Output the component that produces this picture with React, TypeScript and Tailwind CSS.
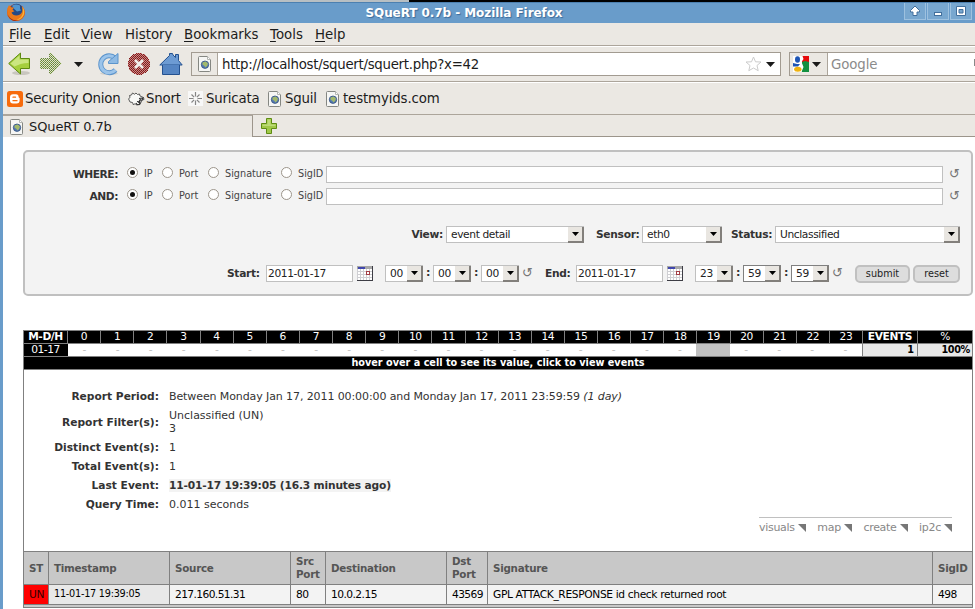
import type { ReactNode } from "react";
import clsx from "clsx";

const hours = Array.from({ length: 24 }, (_, i) => i);

const menus = [
  { before: "", key: "F", after: "ile", width: "w-[35px]" },
  { before: "", key: "E", after: "dit", width: "w-[37px]" },
  { before: "", key: "V", after: "iew", width: "w-[44px]" },
  { before: "Hi", key: "s", after: "tory", width: "w-[59px]" },
  { before: "", key: "B", after: "ookmarks", width: "w-[86px]" },
  { before: "", key: "T", after: "ools", width: "w-[45px]" },
  { before: "", key: "H", after: "elp", width: "w-[40px]" },
];

function PageIcon() {
  return (
    <svg width="14" height="16" viewBox="0 0 14 16" className="block shrink-0">
      <path d="M1.5.5h8l3 3v11a1 1 0 0 1-1 1h-10a1 1 0 0 1-1-1v-13a1 1 0 0 1 1-1z" fill="#f6f6f4" stroke="#858782" />
      <path d="M9.5.5v3h3" fill="#fff" stroke="#b5b6b2" />
      <circle cx="7" cy="8.700" r="3.700" fill="#5579b3" stroke="#34507f" strokeWidth=".8" />
      <path d="M4.500 6.500l3.100-.9 2.300 1.600-.5 2.400-1.700 1.900-1.500-1.800-1.700-1.100z" fill="#a3b96a" />
    </svg>
  );
}

function FirefoxIcon() {
  return (
    <svg width="20" height="19" viewBox="0 0 20 20" preserveAspectRatio="none">
      <circle cx="10" cy="10" r="9" fill="#d9480f" />
      <circle cx="10.5" cy="7.6" r="6.8" fill="#244a86" />
      <path d="M6 3c2.500-2 6-1.800 8-.4L14 6l1 2-4 1-3-3z" fill="#4f95d0" />
      <path d="M1.200 6L3 2.200l2 2.300 3 .3-1.500 2.400 2 1.500-3 1.300c1 3 5 4 8.500 2 2.500-1.500 3-5 2-8.500 2.500 2.500 3.500 6.500 2 10-2 4-5.500 5.500-9 5-4.500-.5-7.500-4-7.800-8z" fill="#e9791c" />
      <path d="M16.500 4c2 3 2.500 7 .5 10-1.500 2.500-4 3.800-6.500 3.800 4-1.300 6.500-4.800 6.500-8.500z" fill="#f8b63a" />
      <path d="M2 12c1.500 4.500 6 7 11 6-5 2.400-10-.5-11-6z" fill="#a32c10" />
    </svg>
  );
}

function BackIcon() {
  return (
    <svg width="24" height="24" viewBox="0 0 24 24">
      <ellipse cx="13" cy="21" rx="9" ry="2" fill="#c9c6bf" />
      <path d="M.700 11.500L12.500 1v5.500h9v10h-9V22z" fill="#a5cf3d" stroke="#5d8a10" />
      <path d="M2.500 11.500l9-8v4h9v3.400c-6 .2-10 1.500-14 3.500z" fill="#cbe681" />
    </svg>
  );
}

function ForwardIcon() {
  return (
    <svg width="24" height="24" viewBox="0 0 24 24" shapeRendering="crispEdges">
      <defs>
        <pattern id="fwd" width="2" height="2" patternUnits="userSpaceOnUse">
          <rect width="2" height="2" fill="#dfe3cd" />
          <rect width="1" height="1" fill="#64813a" />
          <rect x="1" y="1" width="1" height="1" fill="#7c9b43" />
        </pattern>
      </defs>
      <path d="M1 6h9V1h2l11 10v1L12 22h-2v-5H1z" fill="url(#fwd)" />
    </svg>
  );
}

function ReloadIcon() {
  return (
    <svg width="24" height="24" viewBox="0 0 24 24">
      <ellipse cx="13" cy="21.500" rx="9" ry="1.500" fill="#d3d0ca" />
      <path d="M19 6A8.500 8.500 0 1 0 19.500 18" fill="none" stroke="#5b94cc" strokeWidth="5" />
      <path d="M19 6A8.500 8.500 0 1 0 19.500 18" fill="none" stroke="#9cc4ea" strokeWidth="3.200" />
      <path d="M22 1.500v10h-9.500v-2l3-2.500z" fill="#8ebae4" stroke="#5b94cc" />
    </svg>
  );
}

function StopIcon() {
  return (
    <svg width="24" height="24" viewBox="0 0 24 24">
      <defs>
        <pattern id="stop" width="2" height="2" patternUnits="userSpaceOnUse">
          <rect width="2" height="2" fill="#c88a88" />
          <rect width="1" height="1" fill="#7d1717" />
          <rect x="1" y="1" width="1" height="1" fill="#8f2020" />
        </pattern>
      </defs>
      <circle cx="12" cy="12" r="11" fill="url(#stop)" shapeRendering="crispEdges" />
      <path d="M8 8l8 8M16 8l-8 8" stroke="#f1eeeb" strokeWidth="2.600" />
    </svg>
  );
}

function HomeIcon() {
  return (
    <svg width="24" height="24" viewBox="0 0 24 24">
      <path d="M3.500 12v10.500h17V12" fill="#5585c3" stroke="#24518f" />
      <path d="M.8 13L10.500 3.500V1.500h3l.5 1.500 2.500 2.500V2.500h3v6L23.200 13z" fill="#6d9bd3" stroke="#24518f" />
      <rect x="4" y="13" width="16" height="9" fill="#5585c3" />
    </svg>
  );
}

function BloggerIcon() {
  return (
    <svg width="16" height="16" viewBox="0 0 16 16">
      <rect width="16" height="16" rx="2.500" fill="#f76b0c" />
      <path d="M6 3.200h3a2.600 2.600 0 0 1 2.600 2.600c0 .8.300 1 1 1.200v2.500a3 3 0 0 1-3 3H6a3 3 0 0 1-3-3V6.200a3 3 0 0 1 3-3z" fill="#fff" />
      <path d="M6 6.200h2.500M6 9.700h4" stroke="#f76b0c" strokeWidth="1.300" strokeLinecap="round" />
    </svg>
  );
}

function SnortIcon() {
  return (
    <svg width="17" height="14" viewBox="0 0 17 14" fill="none" stroke="#4a4a4a" strokeWidth=".9">
      <path d="M.6 7L2 5.200 1.500 3.500l2-.5L4.500 1l2 1.200L8 1l1.500 1.500 2-.5L12 4l3.500 1.500.5 2-2 .5-2 4.500-3.500.5L7 11.500 5.500 13 4.500 10.500 2 10z" fill="#f8f8f6" />
      <path d="M11 6.500l4-.5-1 2-3 .5M9 9.500l3 .5-.5 2.200-2.500.3-1-1.500M12.500 7l-2 4" stroke="#333" strokeWidth="1.100" />
    </svg>
  );
}

function SuricataIcon() {
  return (
    <svg width="15" height="15" viewBox="0 0 15 15">
      <rect width="15" height="15" fill="#f8f8f8" />
      <path
        d="M7.500 1v4.500M7.500 9.500V14M1 7.500h4.500M9.500 7.500H14M3.500 3.500l2.600 2.600M8.900 8.900l2.600 2.600M11.500 3.500L8.900 6.100M6.100 8.900l-2.600 2.600"
        stroke="#858585"
        strokeWidth="1.200"
      />
    </svg>
  );
}

function GoogleIcon() {
  return (
    <svg width="16" height="16" viewBox="0 0 16 16">
      <rect width="16" height="16" fill="#fff" />
      <path d="M8 0h8v6H9z" fill="#e60b0b" />
      <path d="M9 6l3-1 4 1v10H8.500z" fill="#129040" />
      <path d="M7 0h2.500L10.500 3 8.500 6 10.500 11l-2 5H7z" fill="#fff" />
      <ellipse cx="4.500" cy="3.500" rx="2.500" ry="3.300" fill="#1e55b5" />
      <path d="M0 7l4 1 3 0-2 2.500H0z" fill="#1e55b5" />
      <ellipse cx="4.800" cy="13.300" rx="3.700" ry="2.500" fill="#eeb211" />
    </svg>
  );
}

function CalendarIcon() {
  return (
    <svg width="16" height="15" viewBox="0 0 16 15" shapeRendering="crispEdges" className="block shrink-0">
      <rect width="16" height="15" fill="#cfcfd3" />
      <path d="M1 3h2v2H1zM4 3h2v2H4zM7 3h2v2H7zM10 3h2v2h-2zM13 3h2v2h-2zM1 6h2v2H1zM4 6h2v2H4zM7 6h2v2H7zM13 6h2v2h-2zM1 9h2v2H1zM4 9h2v2H4zM7 9h2v2H7zM10 9h2v2h-2zM13 9h2v2h-2zM1 12h2v2H1zM4 12h2v2H4zM7 12h2v2H7zM10 12h2v2h-2zM13 12h2v2h-2z" fill="#fff" />
      <path d="M0 0h16v3H0z" fill="#a7a7a7" />
      <path d="M1 1h7v2H1z" fill="#4047ad" />
      <path d="M9.500 5.500h3v3h-3z" fill="#fff" stroke="#a33d45" />
      <path d="M15 0h1v15H0v-1h15z" fill="#3d3d45" />
    </svg>
  );
}

function Caret({ className }: { className?: string }) {
  return (
    <svg width="9" height="5" viewBox="0 0 9 5" className={clsx("block shrink-0", className)}>
      <path d="M0 0h9L4.500 5z" fill="#1a1a1a" />
    </svg>
  );
}

function Undo({ className }: { className?: string }) {
  return <span className={clsx("w-[10px] text-[13px] leading-[17px] tracking-normal text-[#777]", className)}>↺</span>;
}

function Radio({ checked }: { checked?: boolean }) {
  return (
    <span className="flex size-[11px] shrink-0 items-center justify-center rounded-full border border-[#9c958b] bg-white">
      {checked && <span className="size-[5px] rounded-full bg-[#111]" />}
    </span>
  );
}

function Select({ children, className, dark }: { children: ReactNode; className: string; dark?: boolean }) {
  return (
    <div
      className={clsx(
        "flex h-[17px] shrink-0 items-start justify-between border bg-white pl-1 text-[10.67px] tracking-[-0.38px] text-[#222]",
        dark ? "border-[#808080]" : "border-[#c0c0c0]",
        className
      )}
    >
      <span className="leading-[15px]">{children}</span>
      <span className="-mr-px flex h-4 w-4 items-center justify-center border-r-2 border-b-2 border-[#827f7b] bg-[#e9e6e1]">
        <svg width="7" height="4" viewBox="0 0 7 4">
          <path d="M0 0h7L3.500 4z" fill="#000" />
        </svg>
      </span>
    </div>
  );
}

function FilterRow({ label }: { label: string }) {
  return (
    <div className="flex h-[17px] items-center text-[9.700px] tracking-normal text-[#444]">
      <span className="w-[93px] text-right text-[10.67px] font-bold tracking-[-0.45px] text-[#333]">{label}</span>
      <span className="ml-[9px] -mt-1"><Radio checked /></span>
      <span className="ml-[6px] w-[18px]">IP</span>
      <span className="-mt-1"><Radio /></span>
      <span className="ml-[6px] w-[29px]">Port</span>
      <span className="-mt-1"><Radio /></span>
      <span className="ml-[6px] w-[56px]">Signature</span>
      <span className="-mt-1"><Radio /></span>
      <span className="ml-[6px] w-[28px]">SigID</span>
      <input className="h-[17px] w-[617px] border border-[#c0c0c0] bg-white" />
      <Undo className="ml-[6px] -mt-0.5" />
    </div>
  );
}

function TimePicker({ values, dark }: { values: string[]; dark?: boolean }) {
  return (
    <div className="flex items-center">
      {values.map((value, i) => (
        <div key={i} className="flex items-center">
          {i > 0 && <span className="w-[10px] text-center text-[11px] font-bold">:</span>}
          <Select className="w-[38px]" dark={dark && i > 0}>{value}</Select>
        </div>
      ))}
    </div>
  );
}

function DateInput() {
  return (
    <div className="flex h-[17px] w-[87px] shrink-0 items-center border border-[#c0c0c0] bg-white pl-px text-[10.67px] tracking-[-0.4px] text-[#222]">
      2011-01-17
    </div>
  );
}

function Browser() {
  return (
    <header className="shrink-0 text-[13.33px] text-[#1c1c1c]">
      <div className="flex h-[2px] bg-black">
        <div className="w-[409px] bg-[#b8bfc3]" />
      </div>
      <div className="flex h-[21px] items-start border-t border-[#4c80b0] bg-[#699cca]">
        <div className="ml-[6px] w-[20px]"><FirefoxIcon /></div>
        <h1 className="w-[872px] pl-[4px] text-center text-[12px] leading-[20px] font-bold tracking-[-0.07px] text-white [text-shadow:1px_1px_1px_#3b6a99]">
          SQueRT 0.7b - Mozilla Firefox
        </h1>
        <div className="ml-[6px] flex shrink-0 gap-px text-white">
          <span className="flex h-[17px] w-[22px] items-center justify-center border border-t-0 border-[#9dc1df] bg-[#78a7cf]">
            <svg width="12" height="12" viewBox="0 0 12 12"><path d="M6 1L1.500 5.500v1.500h2.500v3.500h4V7h2.500V5.500z" fill="#fff" stroke="#426f9c" /></svg>
          </span>
          <span className="flex h-[17px] w-[22px] items-center justify-center border border-t-0 border-[#9dc1df] bg-[#78a7cf] pt-1.5">
            <span className="h-1 w-2 border border-[#426f9c] bg-white" />
          </span>
          <span className="flex h-[17px] w-[22px] items-center justify-center border border-t-0 border-[#9dc1df] bg-[#78a7cf]">
            <svg width="10" height="10" viewBox="0 0 10 10"><path d="M.5.500h9v9h-9zM3 3.500h4v3.500H3z" fill="#fff" fillRule="evenodd" stroke="#426f9c" /></svg>
          </span>
        </div>
      </div>
      <div className="border-l-[3px] border-[#699cca] bg-[#ebe8e3]">
        <nav className="flex h-[23px] items-center border-b border-[#aca59b] pt-px pl-[6px]">
          {menus.map((menu) => (
            <span key={menu.key} className={menu.width}>
              {menu.before}
              <span className="underline underline-offset-2">{menu.key}</span>
              {menu.after}
            </span>
          ))}
        </nav>
        <div className="flex h-[36px] items-center border-t border-b border-t-white border-b-[#aca59b] pl-[5px]">
          <BackIcon />
          <div className="ml-[7px]"><ForwardIcon /></div>
          <Caret className="ml-[11px]" />
          <div className="ml-[13px]"><ReloadIcon /></div>
          <div className="ml-[7px]"><StopIcon /></div>
          <div className="ml-[8px]"><HomeIcon /></div>
          <div className="ml-[8px] flex h-[24px] w-[590px] items-center border border-[#a29b91] bg-white">
            <div className="flex h-[22px] w-[26px] items-center justify-center border-r border-[#aca59b] bg-[#ebe8e3]">
              <PageIcon />
            </div>
            <span className="mt-px ml-[4px] tracking-[-0.28px]">http://localhost/squert/squert.php?x=42</span>
            <svg width="17" height="16" viewBox="0 0 17 16" className="ml-auto">
              <path d="M8.500 1l2 4.800 5.500.2-4 3.500 1.200 5.200-4.700-2.700-4.700 2.700L5 9.500 1 6l5.500-.2z" fill="#fff" stroke="#ccc" />
            </svg>
            <Caret className="mr-[5px] ml-[4px]" />
          </div>
          <div className="ml-[8px] flex h-[24px] flex-1 items-center border border-r-0 border-[#a29b91] bg-white">
            <div className="flex h-[22px] w-[38px] items-center border-r border-[#aca59b] bg-[#ebe8e3] pl-[3px]">
              <GoogleIcon />
              <Caret className="ml-[3px]" />
            </div>
            <span className="mt-px ml-[3px] tracking-[-0.1px] text-[#8b8b8b]">Google</span>
            <span className="mt-[-4px] ml-auto h-[7px] w-px bg-[#888]" />
          </div>
        </div>
        <div className="flex h-[33px] items-center border-t border-b border-t-white border-b-[#aca59b] pl-[4px] tracking-[-0.2px]">
          <BloggerIcon />
          <span className="ml-[2px] w-[103px]">Security Onion</span>
          <SnortIcon />
          <span className="ml-[1px] w-[42px]">Snort</span>
          <SuricataIcon />
          <span className="ml-[3px] w-[62px]">Suricata</span>
          <PageIcon />
          <span className="ml-[3px] w-[41px]">Sguil</span>
          <PageIcon />
          <span className="ml-[3px] tracking-[-0.13px]">testmyids.com</span>
        </div>
        <div className="flex h-[22px]">
          <div className="flex w-[250px] items-center border-t border-r border-t-[#aca59b] border-r-[#9c958b] pl-[7px]">
            <PageIcon />
            <span className="mt-px ml-[5px] text-[13px] tracking-[-0.1px]">SQueRT 0.7b</span>
          </div>
          <div className="flex-1 border-b border-[#9c958b] pt-[3px] pl-[8px]">
            <svg width="16" height="16" viewBox="0 0 16 16">
              <path d="M5.500.500h5v5h5v5h-5v5h-5v-5h-5v-5h5z" fill="#a1c94a" stroke="#5f8c12" />
              <path d="M6.500 1.500h3v5h5v1.500h-13V6.500h5z" fill="#bddb78" />
            </svg>
          </div>
        </div>
      </div>
    </header>
  );
}

function SearchForm() {
  return (
    <form className="h-[146px] rounded-[5px] border-2 border-[#c0c0c0] bg-[#f3f3f3] pt-[14px] text-[10.67px] tracking-[-0.3px] text-[#333]">
      <FilterRow label="WHERE:" />
      <div className="h-[5px]" />
      <FilterRow label="AND:" />
      <div className="mt-[21px] flex h-[17px] items-center justify-end pr-[11px] font-bold">
        <span className="mr-[3px]">View:</span>
        <Select className="w-[138px] font-normal">event detail</Select>
        <span className="mr-[4px] ml-[12px] w-[42px]">Sensor:</span>
        <Select className="w-[80px] font-normal">eth0</Select>
        <span className="mr-[3px] ml-[9px] w-[41px]">Status:</span>
        <Select className="w-[185px] font-normal">Unclassified</Select>
      </div>
      <div className="mt-[22px] flex h-[17px] items-center">
        <span className="ml-[202px] w-[39px] font-bold">Start:</span>
        <DateInput />
        <span className="mr-[12px] ml-[4px]"><CalendarIcon /></span>
        <TimePicker values={["00", "00", "00"]} />
        <Undo className="ml-[3px] -mt-0.5" />
        <span className="ml-[13px] w-[31px] font-bold">End:</span>
        <DateInput />
        <span className="mr-[12px] ml-[4px]"><CalendarIcon /></span>
        <TimePicker values={["23", "59", "59"]} dark />
        <Undo className="ml-[3px] -mt-0.5" />
        <button type="button" className="ml-[13px] h-[18px] w-[55px] rounded-[5px] border-2 border-[#c0c0c0] bg-[#ddd] text-[9.700px] leading-[13px] tracking-normal text-[#222]">
          submit
        </button>
        <button type="button" className="ml-[3px] h-[18px] w-[47px] rounded-[5px] border-2 border-[#c0c0c0] bg-[#ddd] text-[9.700px] leading-[13px] tracking-normal text-[#222]">
          reset
        </button>
      </div>
    </form>
  );
}

function HourGrid() {
  return (
    <div className="border-t border-[#808080] text-[10.67px]">
      <div className="flex h-[13px] border-b border-[#808080] bg-black leading-[12px] tracking-[-0.4px] text-white">
        <span className="w-[44px] shrink-0 border-r border-[#808080] text-center font-bold">M-D/H</span>
        {hours.map((hour) => (
          <span key={hour} className="min-w-0 flex-1 border-r border-[#808080] text-center">{hour}</span>
        ))}
        <span className="w-[55px] shrink-0 border-r border-[#808080] text-center font-bold">EVENTS</span>
        <span className="w-[54px] shrink-0 text-center">%</span>
      </div>
      <div className="flex h-[13px] border-b border-[#808080] bg-white leading-[12px]">
        <span className="w-[44px] shrink-0 border-r border-black bg-black text-center tracking-[-0.5px] text-white">01-17</span>
        {hours.map((hour) => (
          <span key={hour} className={clsx("min-w-0 flex-1 text-center text-[#c0c0c0]", hour === 19 && "bg-[#c0c0c0]")}>
            {hour === 19 ? "" : "-"}
          </span>
        ))}
        <span className="w-[56px] shrink-0 border-x border-[#808080] bg-[#e8e8e8] pr-[3px] text-right text-[9.700px] font-bold">1</span>
        <span className="w-[54px] shrink-0 bg-[#e8e8e8] pr-[2px] text-right text-[9.700px] font-bold tracking-[-0.4px]">100%</span>
      </div>
      <div className="h-[13px] border-b border-[#808080] bg-black text-center text-[9.700px] leading-[11px] font-bold text-white">
        hover over a cell to see its value, click to view events
      </div>
    </div>
  );
}

function ReportRow({ label, children }: { label: string; children: ReactNode }) {
  return (
    <div className="flex items-center py-[3px] leading-[13px]">
      <span className="w-[135px] text-right text-[10.67px] font-bold">{label}</span>
      <span className="ml-[10px]">{children}</span>
    </div>
  );
}

function Report() {
  return (
    <div className="h-[181px] bg-white pt-[17px] text-[11px] text-[#333]">
      <ReportRow label="Report Period:">
        <span className="tracking-[-0.1px]">
          Between Monday Jan 17, 2011 00:00:00 and Monday Jan 17, 2011 23:59:59 <i>(1 day)</i>
        </span>
      </ReportRow>
      <ReportRow label="Report Filter(s):">
        Unclassified (UN)
        <br />3
      </ReportRow>
      <ReportRow label="Distinct Event(s):">1</ReportRow>
      <ReportRow label="Total Event(s):">1</ReportRow>
      <ReportRow label="Last Event:">
        <b className="bg-[#f3f3f3] text-[10.67px] tracking-[-0.17px]">11-01-17 19:39:05 (16.3 minutes ago)</b>
      </ReportRow>
      <ReportRow label="Query Time:">0.011 seconds</ReportRow>
      <div className="mt-[3px] mr-[20px] ml-auto flex w-[193px] justify-between border-t border-[#c0c0c0] pt-[3px] leading-[13px] tracking-[-0.3px] text-[#888]">
        {["visuals", "map", "create", "ip2c"].map((name) => (
          <span key={name} className="flex items-center gap-[3px]">
            {name}
            <svg width="8" height="8" viewBox="0 0 8 8" className="mt-px">
              <path d="M0 0h8v8z" fill="#777" />
            </svg>
          </span>
        ))}
      </div>
    </div>
  );
}

function EventTable() {
  const cols = "grid grid-cols-[25px_121px_121px_35px_121px_41px_445px_39px]";
  const cell = "flex items-center border-r border-[#808080] pl-[5px] last:border-r-0";
  return (
    <div className="border-y border-[#808080] text-[10.67px]">
      <div className={clsx(cols, "h-[32px] bg-[#c8c8c8] text-[10.33px] leading-[13px] font-bold tracking-[-0.25px] text-[#555]")}>
        <span className={cell}>ST</span>
        <span className={cell}>Timestamp</span>
        <span className={cell}>Source</span>
        <span className={cell}>Src<br />Port</span>
        <span className={cell}>Destination</span>
        <span className={cell}>Dst<br />Port</span>
        <span className={cell}>Signature</span>
        <span className={cell}>SigID</span>
      </div>
      <div className={clsx(cols, "h-[21px] border-y border-[#808080] bg-[#f3f3f3] tracking-[-0.6px] text-black")}>
        <span className={clsx(cell, "bg-[#f00] tracking-[-0.3px] text-[#300]")}>UN</span>
        <span className={clsx(cell, "bg-[#e8e8e8] text-[9.700px] tracking-[-0.25px]")}>11-01-17 19:39:05</span>
        <span className={clsx(cell, "tracking-[-0.6px]")}>217.160.51.31</span>
        <span className={cell}>80</span>
        <span className={clsx(cell, "tracking-[-0.55px]")}>10.0.2.15</span>
        <span className={cell}>43569</span>
        <span className={clsx(cell, "tracking-[-0.36px]")}>GPL ATTACK_RESPONSE id check returned root</span>
        <span className={clsx(cell, "tracking-[-0.5px]")}>498</span>
      </div>
      <div className="h-[2px] bg-[#c8c8c8]" />
    </div>
  );
}

export default function App() {
  return (
    <div className="flex h-[609px] w-[975px] flex-col overflow-hidden bg-white font-['DejaVu_Sans',sans-serif] whitespace-nowrap">
      <Browser />
      <main className="flex-1 border-l-[3px] border-[#699cca] pt-[13px] pr-[2px] pl-[20px]">
        <SearchForm />
        <div className="mt-[34px] border-x border-[#808080]">
          <HourGrid />
          <Report />
          <EventTable />
        </div>
      </main>
    </div>
  );
}
